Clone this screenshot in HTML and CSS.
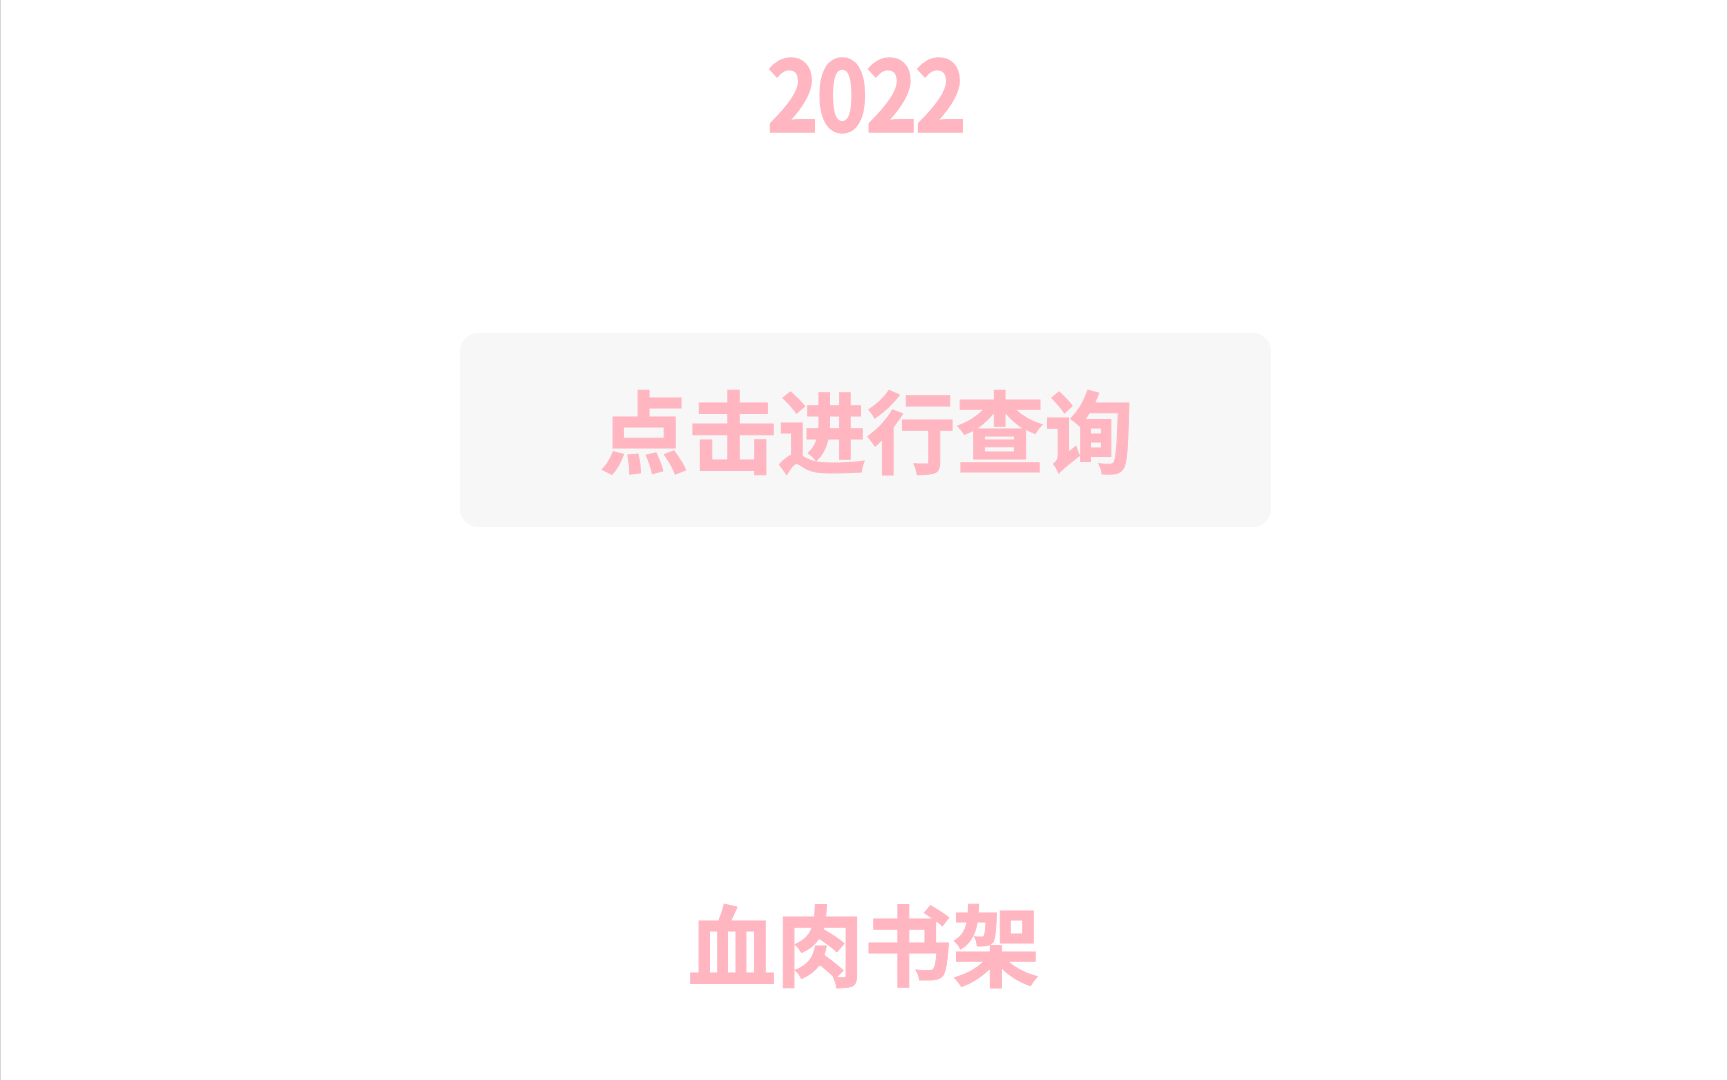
FILE: index.html
```html
<!DOCTYPE html>
<html lang="zh-CN">
<head>
<meta charset="utf-8">
<title>血肉书架</title>
<link rel="stylesheet" href="styles.css">
</head>
<body>
<main class="page">
  <div class="year">2022</div>
  <div class="query-btn">点击进行查询</div>
  <div class="brand">血肉书架</div>
</main>
</body>
</html>
```
FILE: styles.css
```css
html, body {
  margin: 0;
  padding: 0;
  background: #ffffff;
}
.page {
  box-sizing: border-box;
  width: 1728px;
  height: 1080px;
  border-left: 1px solid #d6d6d6;
  border-right: 1px solid #d6d6d6;
  display: flex;
  flex-direction: column;
  align-items: center;
  padding-top: 40px;
  font-family: "Noto Sans CJK SC", "Noto Sans", sans-serif;
  font-weight: 700;
  color: #ffb6c1;
}
.year {
  font-size: 98px;
  line-height: 1;
  letter-spacing: -3px;
  padding-left: 3px;
  transform: scaleX(0.9);
  -webkit-text-stroke: 1.5px #ffb6c1;
}
.query-btn {
  box-sizing: border-box;
  margin-top: 195px;
  margin-left: 3px;
  width: 811px;
  height: 194px;
  padding-bottom: 6px;
  padding-left: 2px;
  border-radius: 18px;
  background: #f7f7f7;
  display: flex;
  align-items: center;
  justify-content: center;
  font-size: 89px;
  line-height: 1;
  -webkit-text-stroke: 1px #ffb6c1;
}
.brand {
  margin-top: 370px;
  font-size: 88px;
  line-height: 1;
  -webkit-text-stroke: 1px #ffb6c1;
}
```
